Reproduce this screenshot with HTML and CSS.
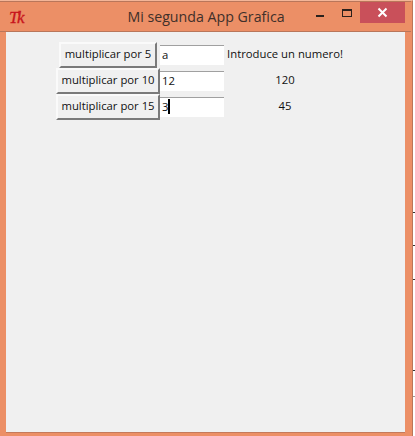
FILE: index.html
```html
<!DOCTYPE html>
<html>
<head>
    <meta charset='utf-8'>
    <title>Mi segunda App Grafica</title>
    <link rel="stylesheet" href="styles.css">
</head>
<body>
<div class="window">
    <header class="titlebar">
        <span class="tk-icon">Tk</span>
        <span class="title">Mi segunda App Grafica</span>
        <div class="controls">
            <span class="btn-min"></span>
            <span class="btn-max"></span>
            <span class="btn-close">
                <svg width="11" height="11" viewBox="0 0 11 11">
                    <path d="M1.5 1.5L9.5 9.5M9.5 1.5L1.5 9.5" stroke="#fff" stroke-width="2" fill="none"/>
                </svg>
            </span>
        </div>
    </header>
    <main class="client">
        <div class="form">
            <button class="tk-button narrow">multiplicar por 5</button>
            <input class="entry" type="text" value="a">
            <span class="result">Introduce un numero!</span>

            <button class="tk-button">multiplicar por 10</button>
            <input class="entry" type="text" value="12">
            <span class="result">120</span>

            <button class="tk-button">multiplicar por 15</button>
            <div class="entry">3<span class="caret"></span></div>
            <span class="result">45</span>
        </div>
    </main>
</div>
<div class="behind"></div>
</body>
</html>
```

FILE: styles.css
```css
* {
    box-sizing: border-box;
    font-family: "Open Sans", "Noto Sans", Arial, sans-serif;
}

html, body {
    margin: 0;
    padding: 0;
}

body {
    display: flex;
    width: 415px;
    height: 436px;
    overflow: hidden;
    background: #fff;
}

.window {
    width: 413px;
    height: 436px;
    padding: 0 7px 3px 6px;
    background: #ec8f66;
    border-top: 1px solid #f3b598;
    border-right: 1px solid #b9765a;
    display: flex;
    flex-direction: column;
}

.behind {
    width: 2px;
    height: 436px;
    background:
        linear-gradient(#333, #333) 0 212px / 2px 1px no-repeat,
        linear-gradient(#333, #333) 0 245px / 2px 1px no-repeat,
        linear-gradient(#333, #333) 0 279px / 2px 1px no-repeat,
        linear-gradient(#333, #333) 0 370px / 2px 1px no-repeat,
        linear-gradient(#999, #999) 0 396px / 2px 1px no-repeat;
}

.titlebar {
    height: 31px;
    flex: none;
    display: flex;
    align-items: flex-start;
    box-shadow: 0 -1px 0 #b9765a inset;
    margin: 0 -6px;
    padding: 0 6px 0 9px;
    border-top: 1px solid #b9765a;
}

.tk-icon {
    width: 16px;
    margin-top: 9px;
    font-family: "Liberation Serif", serif;
    font-style: italic;
    font-size: 17px;
    line-height: 13px;
    letter-spacing: -1.5px;
    -webkit-text-stroke: 0.3px #c8141c;
    color: #c8141c;
}

.title {
    width: 212px;
    margin: 5px 0 0 75px;
    text-align: center;
    font-size: 14.2px;
    line-height: 20px;
    white-space: nowrap;
    color: #40302a;
}

.controls {
    display: flex;
    margin-left: auto;
    align-items: flex-start;
}

.btn-min {
    width: 8px;
    height: 2px;
    margin-top: 13px;
    background: #2b211c;
}

.btn-max {
    width: 10px;
    height: 8px;
    margin: 7px 8px 0 18px;
    border: 1px solid #2b211c;
    border-top-width: 2px;
}

.btn-close {
    width: 45px;
    height: 21px;
    background: #c9505a;
    display: flex;
    align-items: center;
    justify-content: center;
}

.client {
    flex: 1;
    background: #f0f0f0;
    border-bottom: 1px solid #c47a5c;
    padding-top: 10px;
}

.form {
    display: grid;
    grid-template-columns: 104px 64px 122px;
    grid-auto-rows: 26px;
    justify-content: start;
    margin-left: 50px;
    align-items: center;
}

.tk-button {
    height: 26px;
    padding: 0 0 3px;
    background: #f0f0f0;
    border: 2px solid;
    border-color: #fafafa #7a7a7a #7a7a7a #fafafa;
    font-size: 11.3px;
    color: #111;
    justify-self: stretch;
}

.tk-button.narrow {
    justify-self: center;
    width: 98px;
}

.entry {
    height: 20px;
    width: 64px;
    padding: 0 1px 3px 2px;
    border: 0;
    border-top: 1px solid #a0a0a0;
    background: #fff;
    font-size: 11.3px;
    line-height: 18px;
    color: #111;
    outline: none;
}

.caret {
    display: inline-block;
    width: 2px;
    height: 15px;
    background: #000;
    vertical-align: -3px;
}

.result {
    padding-bottom: 3px;
    text-align: center;
    font-size: 11.3px;
    color: #111;
}
```
